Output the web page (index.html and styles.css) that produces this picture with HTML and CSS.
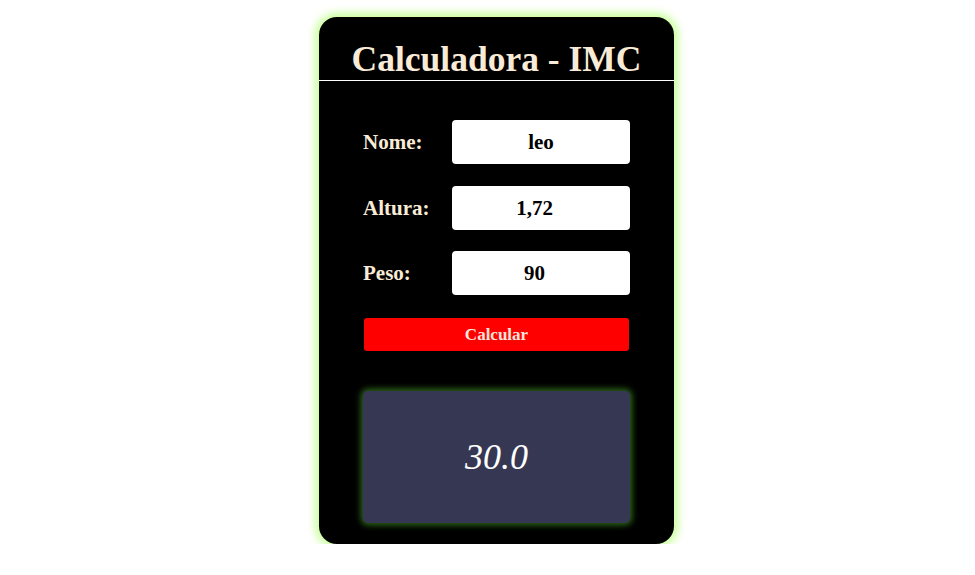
FILE: index.html
```html
<!DOCTYPE html>
<html lang="pt">
<head>
<meta charset="utf-8">
<title>Calculadora - IMC</title>
<link rel="stylesheet" href="styles.css">
</head>
<body>
<main class="card">
  <h1 class="title">Calculadora - IMC</h1>
  <form class="form">
    <div class="row">
      <label class="label">Nome:</label>
      <div class="field">leo</div>
    </div>
    <div class="row">
      <label class="label">Altura:</label>
      <div class="field field-number">1,72</div>
    </div>
    <div class="row">
      <label class="label">Peso:</label>
      <div class="field field-number">90</div>
    </div>
    <div class="button">Calcular</div>
  </form>
  <div class="result">30.0</div>
</main>
</body>
</html>
```
FILE: styles.css
```css
html, body {
  margin: 0;
  padding: 0;
  background: #ffffff;
}
body {
  font-family: "Liberation Serif", "Times New Roman", serif;
  padding-top: 17px;
}
.card {
  box-sizing: border-box;
  width: 355px;
  height: 527px;
  margin-left: 319px;
  background: #000000;
  border-radius: 18px;
  box-shadow: 0 0 9px 4px #c8ff9a;
  display: flex;
  flex-direction: column;
}
.title {
  margin: 0;
  height: 64px;
  box-sizing: border-box;
  padding-top: 23px;
  font-size: 35.5px;
  line-height: 38px;
  font-weight: bold;
  text-align: center;
  color: #faebd7;
  border-bottom: 1px solid #ffffff;
}
.form {
  display: flex;
  flex-direction: column;
  padding: 39px 44px 0 44px;
}
.row {
  display: flex;
  align-items: center;
  height: 44px;
  margin-bottom: 22px;
}
.row:nth-child(2) {
  margin-bottom: 21px;
}
.label {
  width: 89px;
  font-size: 21px;
  font-weight: bold;
  color: #faebd7;
}
.field {
  box-sizing: border-box;
  width: 178px;
  height: 44px;
  background: #ffffff;
  border-radius: 4px;
  display: flex;
  align-items: center;
  justify-content: center;
  font-size: 21px;
  font-weight: bold;
  color: #000000;
}
.field-number {
  padding-right: 13px;
}
.button {
  margin-top: 1px;
  width: 265px;
  height: 33px;
  margin-left: 1px;
  background: #ff0000;
  border-radius: 3px;
  display: flex;
  align-items: center;
  justify-content: center;
  font-size: 17px;
  font-weight: bold;
  color: #f4e6dc;
}
.result {
  margin: 40px 0 0 44px;
  width: 267px;
  height: 132px;
  background: #363853;
  border-radius: 5px;
  box-shadow: 0 0 6px 2px #2f6b1a;
  display: flex;
  align-items: center;
  justify-content: center;
  font-size: 36px;
  font-style: italic;
  color: #ffffff;
}
```
